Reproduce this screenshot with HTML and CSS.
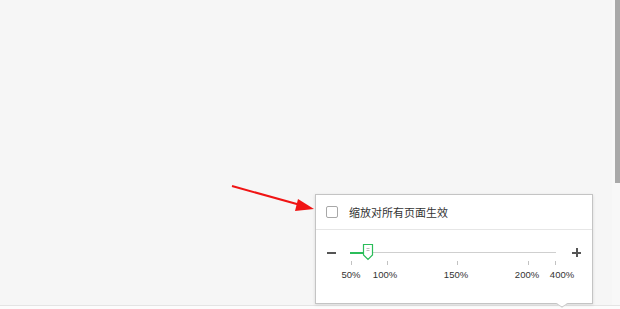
FILE: index.html
```html
<!DOCTYPE html>
<html lang="zh">

<head>
  <meta charset="UTF-8">
  <meta name="viewport" content="width=device-width, initial-scale=1.0">
  <title>缩放设置</title>
  <link rel="stylesheet" href="styles.css">
</head>

<body>
  <div class="viewport">
    <div class="page">
      <!-- 标注箭头 -->
      <svg class="annot-arrow" width="90" height="30" viewBox="0 0 90 30">
        <line x1="2" y1="2" x2="74" y2="22" stroke="#f01414" stroke-width="2" />
        <polygon points="84,25 68,15 65,27" fill="#f01414" />
      </svg>

      <!-- 缩放弹出框 -->
      <div class="zoom-popup">
        <label class="zoom-all">
          <span class="checkbox"></span>
          <span class="zoom-all-text">缩放对所有页面生效</span>
        </label>

        <div class="zoom-slider">
          <span class="zoom-btn minus"></span>
          <div class="track">
            <div class="track-line"></div>
            <div class="track-fill"></div>
            <svg class="thumb" width="12" height="18" viewBox="0 0 12 18">
              <path d="M1.5 1.5 H10.5 V12 L6 16.5 L1.5 12 Z" fill="#fff" stroke="#2bbd5a" stroke-width="1.2" />
              <rect x="4.5" y="5" width="3" height="1" fill="#bbb" />
              <rect x="4.5" y="7" width="3" height="1" fill="#bbb" />
            </svg>
            <span class="tick" style="left: 1px"></span>
            <span class="tick" style="left: 37px"></span>
            <span class="tick" style="left: 107px"></span>
            <span class="tick" style="left: 178px"></span>
            <span class="tick" style="left: 205px"></span>
            <span class="tick-label" style="left: 1px">50%</span>
            <span class="tick-label" style="left: 35px">100%</span>
            <span class="tick-label" style="left: 106px">150%</span>
            <span class="tick-label" style="left: 177px">200%</span>
            <span class="tick-label" style="left: 212px">400%</span>
          </div>
          <span class="zoom-btn plus"></span>
        </div>
        <span class="popup-tail"></span>
      </div>
    </div>
    <div class="scrollbar">
      <div class="scroll-thumb"></div>
    </div>
  </div>
  <div class="statusbar"></div>
</body>

</html>
```

FILE: styles.css
```css
* {
  box-sizing: border-box;
  margin: 0;
  padding: 0;
}

body {
  display: flex;
  flex-direction: column;
  height: 309px;
  overflow: hidden;
  background-color: #f6f6f6;
  color: #333;
  font-family: "Liberation Sans", "Noto Sans CJK SC", sans-serif;
}

.viewport {
  flex: 1;
  display: flex;
}

.page {
  flex: 1;
  position: relative;
}

.scrollbar {
  width: 8px;
  background-color: #f8f8f8;
  display: flex;
  justify-content: flex-end;
}

.scroll-thumb {
  width: 5px;
  height: 183px;
  background-color: #a9a9a9;
}

.statusbar {
  height: 4px;
  background-color: #fcfcfc;
  border-top: 1px solid #e4e4e4;
}

.annot-arrow {
  position: absolute;
  left: 230px;
  top: 184px;
}

.zoom-popup {
  position: absolute;
  left: 315px;
  top: 194px;
  width: 278px;
  height: 110px;
  background-color: #fff;
  border: 1px solid #c4c4c4;
  box-shadow: 0 1px 3px rgba(0, 0, 0, 0.12);
  z-index: 2;
}

.zoom-all {
  display: flex;
  align-items: center;
  height: 35px;
  padding-left: 10px;
  border-bottom: 1px solid #e6e6e6;
}

.checkbox {
  width: 12px;
  height: 12px;
  border: 1px solid #a8a8a8;
  border-radius: 2px;
  background-color: #fff;
}

.zoom-all-text {
  margin-left: 11px;
  font-family: "Noto Sans CJK SC", sans-serif;
  font-size: 11px;
  color: #333;
}

.zoom-slider {
  display: flex;
  align-items: flex-start;
  padding: 18px 0 0 11px;
}

.zoom-btn {
  position: relative;
  width: 9px;
  height: 9px;
}

.zoom-btn::before,
.zoom-btn::after {
  content: "";
  position: absolute;
  background-color: #555;
}

.zoom-btn::before {
  left: 0;
  top: 4px;
  width: 9px;
  height: 1.5px;
}

.plus::after {
  left: 4px;
  top: 0;
  width: 1.5px;
  height: 9px;
}

.minus {
  margin-right: 14px;
}

.plus {
  margin-left: 16px;
}

.track {
  position: relative;
  width: 206px;
  height: 40px;
}

.track-line {
  position: absolute;
  left: 0;
  right: 0;
  top: 4px;
  height: 1px;
  background-color: #cfcfcf;
}

.track-fill {
  position: absolute;
  left: 0;
  width: 16px;
  top: 4px;
  height: 1.5px;
  background-color: #2bbd5a;
}

.thumb {
  position: absolute;
  left: 12px;
  top: -5px;
}

.tick {
  position: absolute;
  top: 13px;
  width: 1px;
  height: 4px;
  background-color: #c2c2c2;
}

.tick-label {
  position: absolute;
  top: 21px;
  transform: translateX(-50%);
  font-size: 9.5px;
  color: #333;
  white-space: nowrap;
}

.popup-tail {
  position: absolute;
  left: 242px;
  bottom: -5px;
  width: 8px;
  height: 8px;
  background-color: #fff;
  border-right: 1px solid #c4c4c4;
  border-bottom: 1px solid #c4c4c4;
  transform: scaleY(0.6) rotate(45deg);
}
```
